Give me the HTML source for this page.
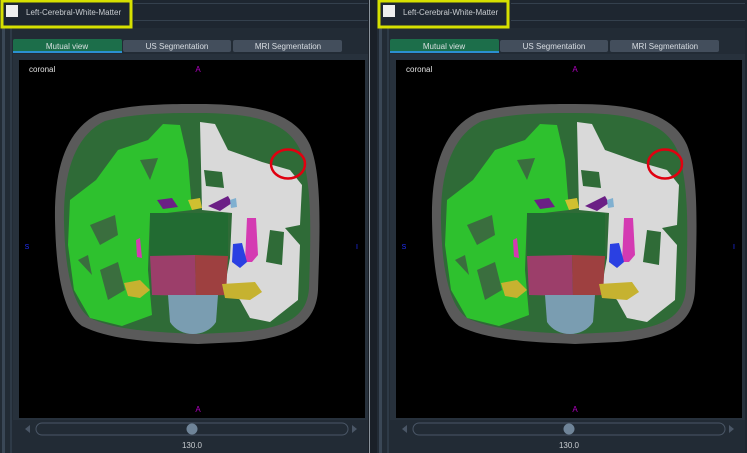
<!DOCTYPE html>
<html><head><meta charset="utf-8"><style>
html,body{margin:0;padding:0;background:#1c232c;width:747px;height:453px;overflow:hidden;font-family:"Liberation Sans",sans-serif}
.p{position:absolute;top:0;width:370px;height:453px}
</style></head><body>
<svg width="0" height="0" style="position:absolute"><defs>
<g id="panel">
<rect x="0" y="0" width="370" height="453" fill="#1e2630"/>
<rect x="0" y="28" width="368" height="425" fill="#222b35"/>
<rect x="2" y="28" width="3" height="425" fill="#3a4756"/>
<rect x="10" y="28" width="2" height="425" fill="#2e3a47"/>
<rect x="134" y="3" width="234" height="1" fill="#34404d"/>
<rect x="134" y="20" width="234" height="1" fill="#34404d"/>
<rect x="6" y="5" width="12" height="12" fill="#eeeeee"/>
<text x="26" y="15" font-size="8" fill="#c8ccd0" font-family="Liberation Sans">Left-Cerebral-White-Matter</text>
<rect x="2" y="1" width="129" height="26" fill="none" stroke="#d6e000" stroke-width="3"/>
<rect x="13" y="39" width="109" height="13" rx="2" fill="#1c6e4a"/>
<rect x="13" y="51" width="109" height="2" fill="#2b8fd0"/>
<text x="67" y="49" font-size="8" fill="#d8e0e0" text-anchor="middle">Mutual view</text>
<rect x="123" y="40" width="108" height="12" rx="2" fill="#434e5c"/>
<text x="177" y="49" font-size="8" fill="#d8dde2" text-anchor="middle">US Segmentation</text>
<rect x="233" y="40" width="109" height="12" rx="2" fill="#434e5c"/>
<text x="288" y="49" font-size="8" fill="#d8dde2" text-anchor="middle">MRI Segmentation</text>
<rect x="13" y="54" width="355" height="366" fill="#27313c"/>
<rect x="19" y="60" width="346" height="358" fill="#000"/>
<text x="29" y="72" font-size="8" fill="#e0e0e0">coronal</text>
<text x="198" y="72" font-size="8" fill="#b000c0" text-anchor="middle">A</text>
<text x="198" y="412" font-size="8" fill="#b000c0" text-anchor="middle">A</text>
<text x="27" y="249" font-size="7" fill="#2030ff" text-anchor="middle">S</text>
<text x="357" y="249" font-size="7" fill="#2030ff" text-anchor="middle">I</text>
<path d="M198,104 C255,104 295,112 310,145 C322,175 320,230 318,290 C316,325 290,338 240,342 L198,344 C150,342 110,340 82,326 C62,312 56,270 55,220 C54,165 68,128 100,113 C130,104 170,104 198,104 Z" fill="#5a5a5a"/>
<path d="M198,113 C250,113 288,120 301,152 C312,185 311,230 309,288 C307,318 285,328 240,332 L198,334 C152,332 115,330 90,318 C72,306 65,268 64,222 C63,170 76,135 105,121 C135,113 170,113 198,113 Z" fill="#2f6b37"/>
<path d="M70,200 L96,180 L118,150 L148,140 L163,124 L180,125 L188,160 L192,210 L150,215 L148,270 L152,315 L122,326 L90,318 L74,290 L68,245 Z" fill="#2ec12e"/>
<path d="M90,225 L115,215 L118,235 L100,245 Z M140,160 L158,158 L150,180 Z M100,270 L118,262 L125,290 L108,300 Z M78,260 L88,255 L92,275 Z" fill="#3a6e3e"/>
<path d="M200,122 L215,124 L228,150 L262,162 L290,170 L302,185 L300,225 L285,228 L300,245 L298,300 L270,322 L250,318 L240,300 L225,285 L230,258 L232,213 L202,210 Z" fill="#d9d9d9"/>
<path d="M204,170 L222,172 L224,188 L206,186 Z M270,230 L284,232 L282,265 L266,262 Z" fill="#2f6b37"/>
<path d="M150,213 L228,213 L228,257 L150,257 Z" fill="#226b32"/>
<path d="M150,256 L195,255 L196,296 L152,295 Z" fill="#9c3e6a"/>
<path d="M195,255 L228,256 L226,295 L196,296 Z" fill="#9e4040"/>
<path d="M168,295 L218,295 L216,322 C206,338 180,338 170,322 Z" fill="#7a9db1"/>
<path d="M124,283 L140,280 L150,290 L140,298 L128,296 Z" fill="#c6b230"/>
<path d="M222,284 L255,282 L262,292 L250,300 L225,298 Z" fill="#c6b230"/>
<path d="M157,200 L172,198 L178,207 L163,209 Z" fill="#6b1f85"/>
<path d="M208,206 L228,196 L232,203 L220,211 Z" fill="#6b1f85"/>
<path d="M188,200 L200,198 L202,208 L192,210 Z" fill="#d0c030"/>
<path d="M230,200 L236,198 L237,207 L231,208 Z" fill="#80b0d0"/>
<path d="M247,218 L256,218 L258,255 L252,262 L245,262 Z" fill="#d43ab2"/>
<path d="M233,244 L242,243 L247,262 L240,268 L232,262 Z" fill="#2a40e2"/>
<path d="M136,240 L140,238 L142,258 L137,257 Z" fill="#d43ab2"/>
<ellipse cx="288" cy="164" rx="17" ry="14.5" fill="none" stroke="#e00010" stroke-width="2.5"/>
<path d="M30,425 L25,429 L30,433 Z" fill="#4a5666"/>
<path d="M352,425 L357,429 L352,433 Z" fill="#4a5666"/>
<rect x="36" y="423" width="312" height="12" rx="6" fill="none" stroke="#4a5666" stroke-width="1"/>
<circle cx="192" cy="429" r="5.5" fill="#6f8498"/>
<text x="192" y="448" font-size="8" fill="#c8ccd0" text-anchor="middle">130.0</text>
</g></defs></svg>
<svg class="p" style="left:0" width="370" height="453"><use href="#panel"/></svg>
<div style="position:absolute;left:368px;top:0;width:9px;height:453px;background:#1a2028"></div>
<div style="position:absolute;left:369px;top:0;width:1px;height:453px;background:#8a939c"></div>
<svg class="p" style="left:377px" width="370" height="453"><use href="#panel"/></svg>
</body></html>
